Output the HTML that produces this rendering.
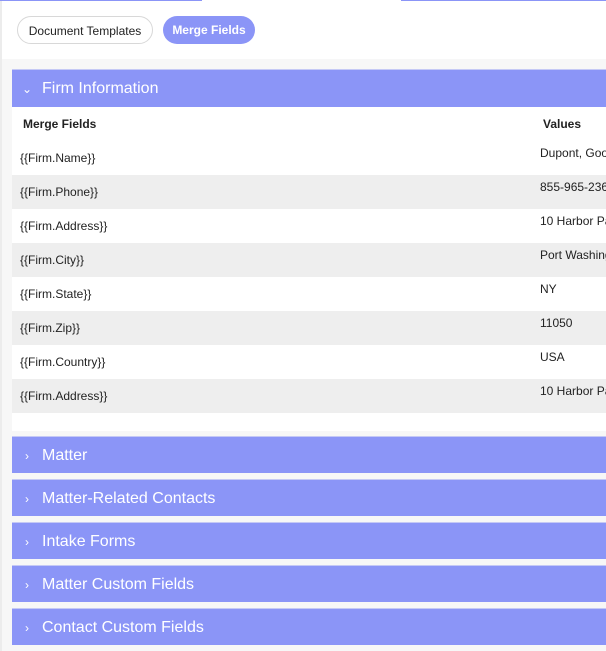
<!DOCTYPE html>
<html><head><style>
body{margin:0;width:606px;height:651px;overflow:hidden;background:#fff;font-family:"Liberation Sans",sans-serif;position:relative}
.ls{position:absolute;left:0;top:0;width:2px;height:651px;background:#ececec}
.tl{position:absolute;top:0;height:1px;background:#8b95f7}
.tab{position:absolute;top:16px;height:28px;border-radius:14px;font-size:12px;line-height:28px;box-sizing:border-box;text-align:center}
.gray{position:absolute;left:2px;top:59px;width:604px;height:592px;background:#f7f7f7}
.hdr{position:absolute;left:12px;width:594px;height:37px;background:#8b95f7;color:#fff;font-size:16px;line-height:37px;border-top:1px solid #c5c9f5;box-sizing:border-box}
.hdr span.c{display:inline-block;width:30px;text-align:center;font-size:12px}
.tbl{position:absolute;left:12px;top:107px;width:594px;height:324px;background:#fff;overflow:hidden}
.row{position:absolute;left:0;width:594px;height:34px;font-size:12px;color:#222;overflow:hidden}
.row .a{position:absolute;left:8px;top:10px}
.row .b{position:absolute;left:528px;top:5px;white-space:nowrap}
</style></head><body>
<div class="ls"></div>
<div class="tl" style="left:0;width:202px"></div>
<div class="tl" style="left:401px;width:205px"></div>
<div class="tab" style="left:17px;width:136px;border:1px solid #d8d8d8;color:#222">Document Templates</div>
<div class="tab" style="left:163px;width:92px;background:#8b95f7;color:#fff;font-weight:bold">Merge Fields</div>
<div class="gray"></div>
<div class="hdr" style="top:69px;height:38px;line-height:37px"><span class="c">⌄</span>Firm Information</div>
<div class="tbl">
<div class="row" style="top:0;font-weight:bold"><span class="a" style="left:11px;top:10px">Merge Fields</span><span class="b" style="left:531px;top:10px">Values</span></div>
<div class="row" style="top:34px"><span class="a">{{Firm.Name}}</span><span class="b">Dupont, Goodman</span></div>
<div class="row" style="top:68px;background:#eee"><span class="a">{{Firm.Phone}}</span><span class="b">855-965-2361</span></div>
<div class="row" style="top:102px"><span class="a">{{Firm.Address}}</span><span class="b">10 Harbor Park</span></div>
<div class="row" style="top:136px;background:#eee"><span class="a">{{Firm.City}}</span><span class="b">Port Washington</span></div>
<div class="row" style="top:170px"><span class="a">{{Firm.State}}</span><span class="b">NY</span></div>
<div class="row" style="top:204px;background:#eee"><span class="a">{{Firm.Zip}}</span><span class="b">11050</span></div>
<div class="row" style="top:238px"><span class="a">{{Firm.Country}}</span><span class="b">USA</span></div>
<div class="row" style="top:272px;background:#eee"><span class="a">{{Firm.Address}}</span><span class="b">10 Harbor Park</span></div>
</div>
<div class="hdr" style="top:436px"><span class="c">›</span>Matter</div>
<div class="hdr" style="top:479px"><span class="c">›</span>Matter-Related Contacts</div>
<div class="hdr" style="top:522px"><span class="c">›</span>Intake Forms</div>
<div class="hdr" style="top:565px"><span class="c">›</span>Matter Custom Fields</div>
<div class="hdr" style="top:608px"><span class="c">›</span>Contact Custom Fields</div>
</body></html>
